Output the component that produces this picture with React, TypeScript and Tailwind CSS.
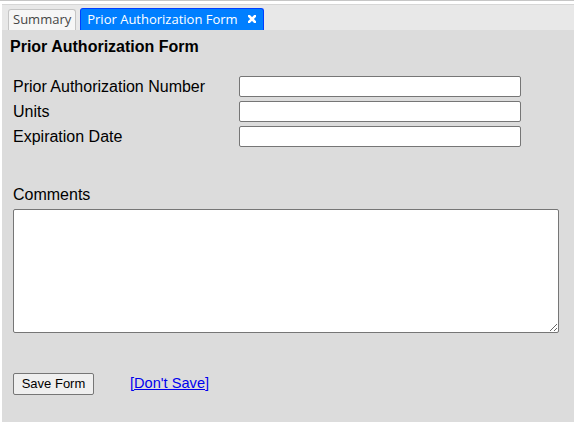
export default function App() {
  const fields = ["Prior Authorization Number", "Units", "Expiration Date"];

  return (
    <div className="h-[422px] w-[574px] overflow-hidden bg-white border-t border-[#c6c6c6] pt-[3px] pl-[2px] font-['Liberation_Sans',Arial,sans-serif]">
      <div className="flex h-full flex-col border-t border-[#d6d6d6]">
        {/* tab strip */}
        <div className="flex h-[25px] items-end gap-[4px] bg-[#e8e8e8] pl-[6px]">
          <div className="flex h-[21px] items-center rounded-t-[3px] border border-b-0 border-[#c5c5c5] bg-[#f6f6f6] px-[4px] font-['Open_Sans',sans-serif] text-[13px] text-[#454545]">
            Summary
          </div>
          <div className="flex h-[22px] items-center gap-[10px] rounded-t-[3px] border border-b-0 border-[#003eff] bg-[#007fff] pl-[6px] pr-[7px] font-['Open_Sans',sans-serif] text-[13px] text-white">
            <span>Prior Authorization Form</span>
            <svg width="8" height="8" viewBox="0 0 8 8" className="mb-[1px]">
              <path d="M1 1L7 7M7 1L1 7" stroke="white" strokeWidth="2.6" strokeLinecap="square" />
            </svg>
          </div>
        </div>

        {/* content */}
        <div className="flex-1 bg-[#dcdcdc] pl-[8px] pt-[8px]">
          <h1 className="text-[16px] font-bold leading-[18px] text-black">Prior Authorization Form</h1>

          <div className="mt-[20px] flex flex-col gap-[4px] pl-[3px]">
            {fields.map((f) => (
              <div key={f} className="flex h-[21px] items-center">
                <label className="w-[226px] text-[16px] text-black">{f}</label>
                <input
                  type="text"
                  className="h-[21px] w-[282px] rounded-[2px] border border-[#767676] bg-white px-1 text-[13px] outline-none"
                />
              </div>
            ))}
          </div>

          <div className="mt-[39px] pl-[3px]">
            <div className="text-[16px] leading-[18px] text-black">Comments</div>
            <textarea className="mt-[5px] block h-[124px] w-[546px] rounded-[2px] border border-[#767676] bg-white p-1 text-[13px] outline-none" />
          </div>

          <div className="mt-[40px] flex items-center pl-[3px]">
            <button className="h-[22px] w-[81px] rounded-[2px] border border-[#767676] bg-[#efefef] text-[13px] text-black">
              Save Form
            </button>
            <a href="#" className="ml-[36px] text-[14.6px] text-[#0000ee]">
              [<span className="underline">Don&apos;t Save</span>]
            </a>
          </div>
        </div>
      </div>
    </div>
  );
}
